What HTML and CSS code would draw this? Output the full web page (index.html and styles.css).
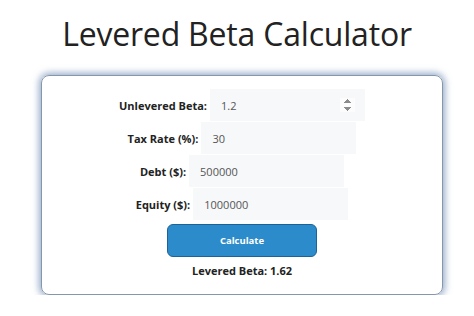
FILE: index.html
```html
<!DOCTYPE html>
<html>
<head>
<meta charset="utf-8">
<link rel="stylesheet" href="styles.css">
</head>
<body>
<h1 class="title">Levered Beta Calculator</h1>
<div class="card">
  <div class="row"><label class="label">Unlevered Beta:</label><input class="field" type="number" value="1.2" step="0.1"></div>
  <div class="row"><label class="label">Tax Rate (%):</label><input class="field" type="text" value="30"></div>
  <div class="row"><label class="label">Debt ($):</label><input class="field" type="text" value="500000"></div>
  <div class="row"><label class="label">Equity ($):</label><input class="field" type="text" value="1000000"></div>
  <div class="actions"><button class="btn">Calculate</button></div>
  <div class="result">Levered Beta: 1.62</div>
</div>
</body>
</html>
```
FILE: styles.css
```css
html, body {
  margin: 0;
  padding: 0;
  background: #ffffff;
}
body {
  font-family: "Open Sans", "Noto Sans", sans-serif;
  color: #222;
}
.title {
  margin: 0;
  padding-top: 13px;
  height: 61px;
  box-sizing: border-box;
  text-align: center;
  font-family: "Open Sans", sans-serif;
  font-weight: 400;
  font-size: 32px;
  line-height: 42px;
  color: #222;
  letter-spacing: -0.2px;
}
.card {
  margin: 14px 0 0 41px;
  width: 402px;
  height: 220px;
  box-sizing: border-box;
  border: 1px solid #8596ad;
  border-radius: 8px;
  box-shadow: 0 0 7px 2px rgba(80, 115, 165, 0.6);
  padding-top: 13px;
  display: flex;
  flex-direction: column;
  align-items: stretch;
}
.row {
  display: flex;
  justify-content: center;
  align-items: center;
  height: 32px;
  margin-bottom: 1px;
}
.label {
  font-size: 11px;
  font-weight: 700;
  color: #222;
  margin-right: 3px;
}
.field {
  width: 155px;
  height: 32px;
  box-sizing: border-box;
  border: none;
  background: #f7f8fa;
  padding: 0 10px 0 11px;
  font-family: "Open Sans", sans-serif;
  font-size: 11px;
  color: #555;
  outline: none;
}
.field::-webkit-inner-spin-button {
  opacity: 1;
}
.actions {
  display: flex;
  justify-content: center;
  margin-top: 3px;
}
.btn {
  width: 150px;
  height: 33px;
  background: #2b8bcb;
  border: 1px solid #1d6397;
  border-radius: 6px;
  color: #ffffff;
  font-family: "Open Sans", sans-serif;
  font-weight: 700;
  font-size: 9.5px;
}
.result {
  text-align: center;
  margin-top: 5px;
  font-size: 11px;
  font-weight: 700;
  line-height: 18px;
  color: #222;
}
```
